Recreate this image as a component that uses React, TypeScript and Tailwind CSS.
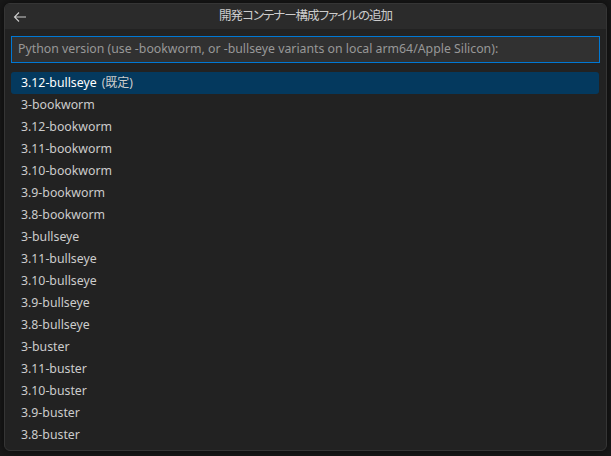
const versions = [
  '3-bookworm',
  '3.12-bookworm',
  '3.11-bookworm',
  '3.10-bookworm',
  '3.9-bookworm',
  '3.8-bookworm',
  '3-bullseye',
  '3.11-bullseye',
  '3.10-bullseye',
  '3.9-bullseye',
  '3.8-bullseye',
  '3-buster',
  '3.11-buster',
  '3.10-buster',
  '3.9-buster',
  '3.8-buster',
]

const font = { fontFamily: '"Noto Sans", "Noto Sans CJK JP", sans-serif' }

export default function App() {
  return (
    <div className="h-[456px] w-[611px] bg-[#181818] pt-[3px] pl-[4px] overflow-hidden" style={font}>
      {/* Quick pick widget */}
      <div className="w-[603px] h-[448px] rounded-md border border-[#353535] bg-[#222222] overflow-hidden shadow-[0_0_8px_rgba(0,0,0,0.6)]">
        {/* Title bar */}
        <div className="relative h-[25px] bg-[#2b2b2b] flex items-center justify-center">
          <button className="absolute left-[6px] top-[4px] w-[18px] h-[18px] flex items-center justify-center text-[#cccccc]">
            <svg width="16" height="16" viewBox="0 0 16 16" fill="none" stroke="currentColor" strokeWidth={1.1}>
              <path d="M14 8H2.5M7 3.5L2.5 8L7 12.5" />
            </svg>
          </button>
          <span className="text-[12.5px] tracking-[-1px] [font-feature-settings:'palt'] text-[#cccccc] leading-none">開発コンテナー構成ファイルの追加</span>
        </div>

        <div className="px-[6px] pt-[7px]">
          {/* Input */}
          <div className="h-[27px] border border-[#0078d4] bg-[#313131] flex items-center pl-[6px]">
            <span className="text-[12.3px] text-[#989898] whitespace-nowrap">
              Python version (use -bookworm, or -bullseye variants on local arm64/Apple Silicon):
            </span>
          </div>

          {/* List */}
          <div className="mt-[9px] pr-[1px]">
            <div className="h-[22px] rounded-[3px] bg-[#04395e] flex items-center pl-[10px]">
              <span className="text-[12.3px] text-white">3.12-bullseye</span>
              <span className="text-[12px] [font-feature-settings:'palt'] text-[#cccccc] ml-[5px]">(既定)</span>
            </div>
            {versions.map(v => (
              <div key={v} className="h-[22px] flex items-center pl-[10px]">
                <span className="text-[12.3px] text-[#cccccc]">{v}</span>
              </div>
            ))}
          </div>
        </div>
      </div>
    </div>
  )
}
